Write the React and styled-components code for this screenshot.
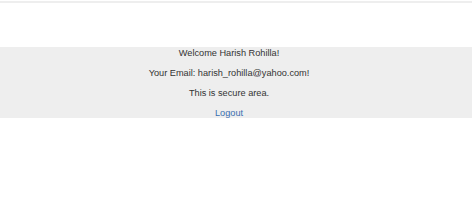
import React from "react";
import styled, { createGlobalStyle } from "styled-components";

const Global = createGlobalStyle`
  html, body { margin: 0; padding: 0; background: #fff; }
  body { font-family: "Liberation Sans", Arial, sans-serif; }
`;

const Page = styled.div`
  width: 472px;
  display: flex;
  flex-direction: column;
`;

const TopRule = styled.div`
  margin-top: 1px;
  height: 2px;
  background: #eeeeee;
`;

const Panel = styled.section`
  margin-top: 44px;
  padding-right: 14px;
  background: #eeeeee;
  display: flex;
  flex-direction: column;
  align-items: center;
`;

const Line = styled.p`
  margin: 0;
  height: 20px;
  line-height: 12px;
  font-size: 9.2px;
  color: #333;
  text-align: center;
`;

const LogoutLink = styled.a`
  display: block;
  height: 11px;
  line-height: 12px;
  font-size: 9.2px;
  color: #3a6fb0;
  text-decoration: none;
`;

export default function App() {
  return (
    <>
      <Global />
      <Page>
        <TopRule />
        <Panel>
          <Line>Welcome Harish Rohilla!</Line>
          <Line>Your Email: harish_rohilla@yahoo.com!</Line>
          <Line>This is secure area.</Line>
          <LogoutLink href="#">Logout</LogoutLink>
        </Panel>
      </Page>
    </>
  );
}
